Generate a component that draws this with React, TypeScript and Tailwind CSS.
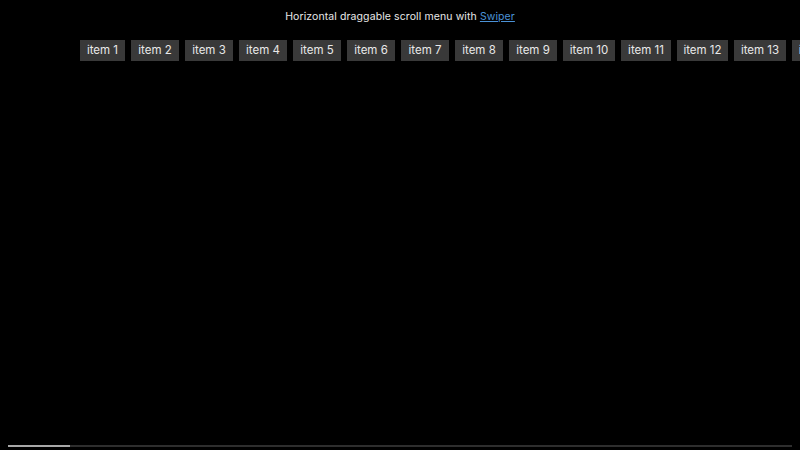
import React from "react";

const items = [
  { label: "item 1", w: "w-[45px]" },
  { label: "item 2", w: "w-[48px]" },
  { label: "item 3", w: "w-[48px]" },
  { label: "item 4", w: "w-[48px]" },
  { label: "item 5", w: "w-[48px]" },
  { label: "item 6", w: "w-[48px]" },
  { label: "item 7", w: "w-[48px]" },
  { label: "item 8", w: "w-[48px]" },
  { label: "item 9", w: "w-[48px]" },
  { label: "item 10", w: "w-[52px]" },
  { label: "item 11", w: "w-[50px]" },
  { label: "item 12", w: "w-[51px]" },
  { label: "item 13", w: "w-[52px]" },
  { label: "item 14", w: "w-[52px]" },
];

export default function App() {
  return (
    <div
      className="w-[800px] h-[450px] bg-black flex flex-col overflow-hidden text-[#e8e8e8]"
      style={{ fontFamily: "Inter, 'Noto Sans', sans-serif" }}
    >
      <div className="pt-[9px] h-[40px] text-center text-[10.5px] leading-[15px] tracking-[0.1px]">
        Horizontal draggable scroll menu with{" "}
        <a href="#" className="text-[#4b92d6] underline">
          Swiper
        </a>
      </div>
      <div className="flex gap-[6px] pl-[80px] whitespace-nowrap">
        {items.map((it) => (
          <div
            key={it.label}
            className={`${it.w} shrink-0 h-[21px] bg-[#393939] flex items-center justify-center text-[11.5px] leading-none`}
          >
            {it.label}
          </div>
        ))}
      </div>
      <div className="mt-auto mb-[3px] mx-[8px] h-[2px] bg-[#2e2e2e] flex">
        <div className="w-[62px] h-full bg-[#a8a8a8]" />
      </div>
    </div>
  );
}
